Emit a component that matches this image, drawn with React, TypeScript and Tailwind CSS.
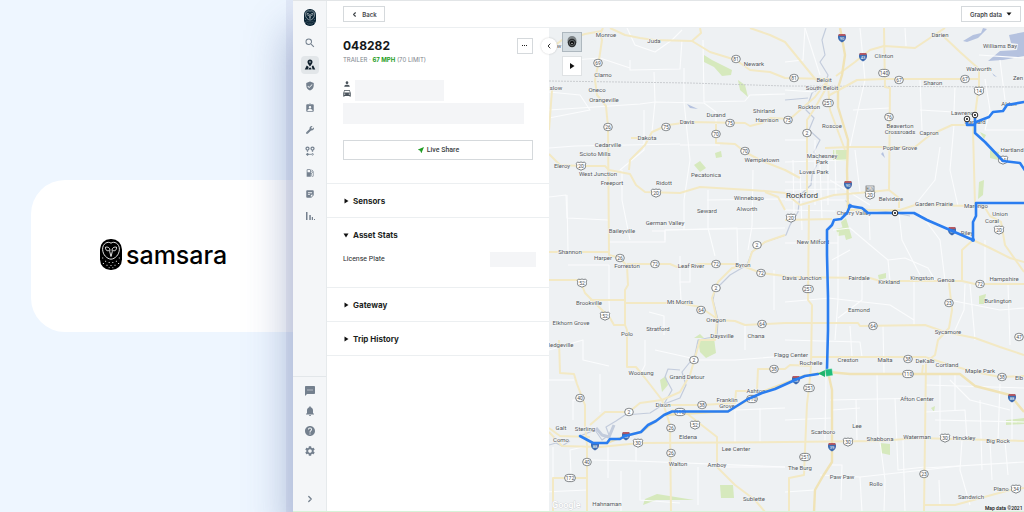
import React from "react";
import {
    MdAssignmentInd,
    MdDirectionsCar,
    MdHelp,
    MdLocalGasStation,
    MdNearMe,
    MdNotifications,
    MdPerson,
    MdSearch,
    MdSettings,
    MdSms,
    MdStickyNote2,
    MdVerifiedUser,
} from "react-icons/md";
import { FaWrench } from "react-icons/fa";
import { ChevronLeft, ChevronRight } from "lucide-react";

type Place = [string, number, number];
type Shield = ["state" | "us" | "interstate", string, number, number];

const places: Place[] = [
    ["Monroe", 606, 35], ["Juda", 654, 41], ["w", 559, 46], ["Newark", 754, 64], ["Clarno", 603, 75],
    ["slow", 556, 88], ["Oneco", 597, 90], ["Orangeville", 604, 100], ["Shirland", 764, 111],
    ["Durand", 716, 115], ["Harrison", 767, 120], ["Davis", 687, 122], ["Dakota", 647, 138],
    ["Cedarville", 608, 145], ["Scioto Mills", 595, 154], ["Wempletown", 762, 160], ["Eleroy", 562, 166],
    ["Darien", 940, 35], ["Williams Bay", 1000, 46], ["Clinton", 884, 56], ["Walworth", 979, 69],
    ["Zen", 1018, 78], ["Beloit", 824, 80], ["South Beloit", 822, 88], ["Sharon", 933, 83],
    ["Rockton", 809, 107], ["Roscoe", 832, 126], ["Alden", 1009, 104], ["Lawrence", 964, 113],
    ["Harvard", 975, 122], ["Beaverton", 900, 126], ["Crossroads", 900, 132], ["Capron", 929, 133],
    ["Poplar Grove", 900, 148], ["Machesney", 822, 156], ["Park", 822, 162], ["Hartland", 1012, 150],
    ["West Junction", 598, 174], ["Freeport", 612, 183], ["Ridott", 664, 183], ["Pecatonica", 706, 175],
    ["Winnebago", 749, 198], ["Seward", 707, 211], ["Alworth", 747, 209], ["German Valley", 665, 223],
    ["Baileyville", 622, 231], ["Shannon", 570, 252], ["Harper", 603, 258], ["Forreston", 627, 266],
    ["Leaf River", 691, 266], ["Byron", 743, 265], ["Mt Morris", 680, 302], ["Brookville", 589, 303],
    ["Oregon", 716, 320], ["Elkhorn Grove", 571, 323], ["Stratford", 658, 329], ["Daysville", 722, 336],
    ["Chana", 756, 336], ["Polo", 627, 334], ["Loves Park", 814, 172], ["Belvidere", 891, 199],
    ["Garden Prairie", 934, 204], ["Marengo", 976, 206], ["Cherry Valley", 854, 213], ["Union", 1000, 214],
    ["Coral", 992, 221], ["Riley", 967, 233], ["New Milford", 813, 242], ["Davis Junction", 802, 278],
    ["Fairdale", 859, 278], ["Kirkland", 889, 282], ["Kingston", 922, 278], ["Genoa", 946, 280],
    ["Hampshire", 1004, 279], ["Burlington", 998, 301], ["Esmond", 859, 310], ["Sycamore", 948, 332],
    ["ledgeville", 561, 345], ["Woosung", 641, 373], ["Grand Detour", 687, 377], ["Dixon", 663, 405],
    ["Franklin", 727, 400], ["Grove", 727, 406], ["Ashton", 756, 391], ["Galt", 561, 428],
    ["Sterling", 585, 429], ["Como", 561, 440], ["Eldena", 688, 437], ["Lee Center", 736, 449],
    ["Walton", 678, 464], ["Amboy", 717, 465], ["Sublette", 754, 499], ["Hahnaman", 607, 504],
    ["Flagg Center", 791, 355], ["Rochelle", 811, 363], ["Creston", 848, 360], ["Malta", 885, 360],
    ["DeKalb", 925, 361], ["Cortland", 947, 365], ["Maple Park", 980, 371], ["Elb", 1019, 378],
    ["Afton Center", 917, 399], ["Lee", 857, 426], ["Scarboro", 823, 432], ["Shabbona", 880, 439],
    ["Waterman", 917, 437], ["Hinckley", 964, 438], ["Big Rock", 998, 441], ["The Burg", 800, 468],
    ["Paw Paw", 842, 477], ["Rollo", 876, 484], ["Plano", 1001, 489], ["Sandwich", 971, 497],
];

const shields: Shield[] = [
    ["state", "69", 598, 63], ["state", "81", 736, 59], ["state", "26", 608, 127], ["state", "75", 666, 127],
    ["state", "75", 730, 123], ["state", "70", 716, 134], ["state", "70", 745, 151], ["us", "20", 581, 166],
    ["interstate", "90", 842, 38], ["interstate", "43", 863, 57], ["state", "140", 884, 73],
    ["state", "81", 794, 78], ["state", "67", 899, 80], ["state", "67", 965, 79], ["us", "14", 979, 91],
    ["state", "251", 828, 103], ["state", "76", 889, 117], ["state", "75", 788, 120], ["state", "2", 807, 133],
    ["us", "14", 1003, 160], ["us", "20", 656, 193], ["state", "26", 620, 258], ["state", "72", 655, 264],
    ["state", "72", 716, 264], ["state", "72", 761, 273], ["state", "2", 757, 245], ["state", "2", 716, 288],
    ["us", "52", 582, 283], ["us", "52", 605, 316], ["state", "64", 701, 310], ["state", "64", 762, 324],
    ["interstate", "90", 848, 185], ["us", "20", 870, 195], ["us", "20", 791, 218],
    ["interstate", "90", 952, 231], ["us", "20", 999, 230], ["state", "251", 808, 289],
    ["state", "72", 980, 284], ["state", "23", 949, 303], ["state", "64", 873, 326], ["state", "47", 1019, 337],
    ["state", "2", 694, 360], ["state", "38", 774, 369], ["state", "40", 580, 398], ["state", "2", 629, 412],
    ["state", "38", 702, 405], ["state", "110", 680, 412], ["state", "110", 752, 399], ["us", "52", 695, 425],
    ["state", "26", 671, 428], ["us", "30", 638, 443], ["state", "26", 671, 453], ["interstate", "88", 595, 446],
    ["interstate", "88", 626, 436], ["state", "40", 587, 462], ["state", "172", 570, 478],
    ["state", "38", 908, 359], ["state", "110", 908, 374], ["state", "38", 1002, 377],
    ["interstate", "88", 796, 380], ["state", "251", 809, 388], ["interstate", "88", 1012, 398],
    ["us", "30", 848, 442], ["us", "30", 945, 438], ["interstate", "39", 832, 447], ["state", "251", 805, 457],
    ["state", "23", 924, 474], ["us", "34", 1016, 489],
];

const highways = [
    "603,28 600,34 602,40 599,60 595,80 597,95 606,106 608,127 609,255 620,258 627,266 628,285 625,290 625,325 627,330 627,367 636,367 645,378 662,400 670,425 671,512",
    "610,28 625,35 640,38 654,40 692,41 710,52 736,60 750,70 770,72 785,78 828,79",
    "692,41 701,33 700,28", "549,50 562,40 570,39 585,34 602,31", "549,130 552,90",
    "629,170 630,160 645,145 652,132 668,125 690,122 745,123 750,126 762,123 770,118 790,119 815,97 828,80",
    "631,138 640,138", "716,124 716,143 735,144 745,152 760,160 785,170 800,178",
    "549,154 560,165 581,166 605,166 609,170 630,174 636,185 645,192 680,193 700,187 750,190 765,191 785,193 800,205",
    "750,28 770,35 785,42 816,80", "884,28 885,87 890,88 889,190",
    "836,76 855,62 870,50 884,46 915,48 945,28", "828,96 857,80 884,79 979,79",
    "940,33 960,52 979,69 979,85 973,130 975,205",
    "825,148 850,147 915,147 930,135 952,125 968,125", "807,195 807,120 815,108 825,90 828,78",
    "828,85 830,110 845,150", "785,220 832,219", "800,205 834,195 870,192 889,190 899,198 899,208",
    "850,210 900,210 915,205 976,206", "973,240 990,248 1010,258 1024,262", "973,240 962,250 962,280",
    "785,277 870,278 880,281 962,281 975,284 1024,284",
    "785,323 858,323 860,326 925,325 945,332 975,338 1000,347 1024,355",
    "949,283 952,310 949,328 938,340 935,355 926,362 924,512",
    "976,203 984,206 990,216 1001,222 1005,245 1024,272",
    "809,205 808,300 812,305 811,366 809,388 807,404 805,450 804,475 789,478 789,512",
    "549,252 608,252", "627,264 670,264 677,267 700,264 735,264 743,266 761,273 785,276",
    "549,280 580,280 585,293 610,318 614,325 625,325", "590,300 625,300", "625,303 680,303 700,307 716,318",
    "743,266 732,268 718,282 712,298 717,320 715,340 700,340 690,375 680,392 662,400 640,403 629,412 605,412 590,425",
    "717,320 735,321 745,325 785,323", "785,235 765,242 752,252 748,265",
    "765,192 778,197 785,210", "559,340 560,373 574,374 577,384 585,405 585,425 587,445 587,512",
    "662,405 702,405 735,403 736,391 757,391 758,369 785,369 790,365 812,366",
    "672,410 685,412 717,437 717,467 735,485 755,500 765,512",
    "549,432 562,446 600,447 640,443 785,442 880,441 917,438 1024,441", "553,512 553,478 587,478",
    "549,428 560,436 590,437", "812,357 925,357 950,365 975,372 1000,377 1024,376",
    "925,505 955,505 1010,490 1024,488", "923,365 922,374",
];

const freeways = [
    "840,28 842,38 845,55 842,75 838,88 838,107 848,140 847,170 848,210",
    "828,372 850,374 960,374 975,386 1010,395 1024,412",
    "828,372 832,390 832,462 823,476 815,490 814,512",
    "580,436 593,443 607,443 625,436 641,432 664,415 728,411 762,392 803,376 828,372",
];

const localRoads = [
    "549,92 580,95 590,110 549,118", "627,28 635,45 655,52 672,40 682,30", "630,60 630,70 680,69 682,40",
    "684,68 684,102 690,160 684,200 684,230", "703,40 704,102 745,101 750,95 785,94", "573,60 600,58 630,68",
    "549,110 640,104 655,102 704,103 716,112 716,124", "654,72 655,102 652,132", "644,110 644,150 620,170",
    "680,145 720,145", "549,148 575,146 680,144", "549,197 566,195 567,218 608,220", "567,195 568,252",
    "608,242 665,242 665,231 652,231", "622,170 622,200 630,240", "665,230 737,228 738,264",
    "708,190 708,228 715,256", "680,256 680,282 690,282 690,264", "707,200 785,199", "753,170 752,226 748,250",
    "665,240 665,230 785,228", "568,265 609,265", "609,265 609,300 610,320", "549,341 549,350 583,340 583,360 609,366",
    "645,340 645,365 640,375", "549,380 574,380", "573,420 573,400 585,400", "600,374 600,412", "649,312 664,316 664,335",
    "681,300 680,282", "774,270 774,310", "655,350 700,360 735,360 785,356", "745,324 745,350",
    "590,460 636,461 636,442", "608,447 608,478", "621,471 621,512", "553,478 553,447", "571,475 570,450 587,446",
    "636,461 785,467", "698,467 698,505", "717,467 785,467", "587,490 545,492", "735,442 735,410 785,408",
    "760,408 760,442", "640,470 640,500 680,503", "785,62 803,60 805,28", "805,28 820,75", "860,28 865,80 858,110 850,147",
    "905,28 906,46", "920,80 922,130", "955,86 954,112 920,110", "853,110 889,108", "940,147 935,180 915,205",
    "954,125 950,170 958,206", "985,79 990,110 985,130 1024,130", "979,55 1024,58", "1000,60 1005,100",
    "785,90 815,92", "785,140 807,140", "785,162 848,160", "815,140 815,205", "835,150 836,195", "855,150 860,192",
    "785,182 848,182", "785,200 850,200", "800,170 802,230", "820,165 822,220", "830,180 870,205",
    "793,160 794,215", "828,160 828,205", "785,190 840,189", "785,210 835,211",
    "833,230 850,228 870,245 888,260 905,258 928,268 935,280", "869,212 870,240", "899,213 902,240 920,275",
    "888,260 890,281", "920,213 940,240 945,281", "838,232 838,300 835,340", "785,302 830,298", "828,298 890,305 914,320",
    "914,281 914,325", "862,281 862,300 838,318", "949,300 1000,310 1024,308", "970,284 975,340", "1008,284 1010,345",
    "785,340 860,342 862,357", "850,326 852,357", "883,326 884,374", "830,400 925,398", "856,400 857,440",
    "877,374 878,440", "895,398 898,470 925,467", "903,440 905,512", "832,410 860,408", "815,375 826,376 825,440",
    "785,420 832,418", "925,412 965,410 967,440", "955,374 955,410", "962,440 960,470 970,505", "980,400 982,470",
    "925,468 1024,462", "940,374 940,438", "990,441 992,480", "1005,441 1008,475", "832,465 842,465 841,500",
    "820,475 860,477 960,466", "860,477 862,512", "785,492 815,490", "880,442 885,480 884,512", "939,480 940,505",
    "950,380 970,400 1010,410", "925,385 1024,388", "935,420 1024,422", "1000,384 998,441", "1012,400 1012,441",
    "965,284 964,310 955,330", "985,240 985,284", "850,250 832,260", "838,243 785,243",
];

const rivers = [
    "826,28 822,40 825,55 820,62 828,75 825,85 812,93 806,110 814,118 809,130 820,140 814,152 819,160 812,175 811,185 800,195 798,212 790,225 786,235 765,242 752,252 747,265 730,275 715,290 713,300 718,320 717,336 698,340 695,355 698,362 690,362 682,372 686,385 680,398 664,404 650,413 625,415 616,421 606,427 609,435 602,440 595,430 580,436",
    "664,404 672,390 665,377 668,369 680,370",
    "549,445 556,443 562,446 570,441",
    "845,200 855,208 890,212 910,216", "785,100 808,98",
];

const routes = [
    "580,436 593,443 607,443 610,439 620,439 625,436 641,432 648,425 656,421 664,415 672,411.5 728,411.5 748,399 762,393 775,389 795,380 805,376 818,374",
    "827,369 828,330 828,297 827,255 827,230 832,225 834,220 841,219 847,213 850,206 862,208 868,213 914,213 927,220 973,240 973,222 976,216 976,203 1100,203",
    "1100,100 1024,102 1007,105 1003,111 993,112 989,117 976,122 974,125 967,125 967,121",
    "975,115 975,133 985,142 1003,161 1020,163 1026,172",
];

const parks = [
    "704,55 712,60 732,70 731,75 722,76 714,67 704,62", "738,80 745,85 748,97 740,90",
    "833,150 847,150 847,161 833,161", "841,222 846,218 852,238 846,240", "836,229 844,227 845,235 838,236",
    "694,500 656,500 643,505 645,499 657,494", "720,485 733,485 734,498 721,498",
    "698,340 714,338 716,353 706,358 700,352", "979,182 984,180 983,195 978,199",
    "1006,420 1024,418 1024,424 1006,425", "880,443 890,444 890,455 881,453",
    "694,165 700,161 706,168 700,172", "715,153 721,151 722,157 716,158",
    "979,296 986,294 984,304 979,304", "990,150 999,152 998,160 990,158", "931,408 935,406 934,412",
    "660,380 666,376 668,385 662,392", "980,132 986,135 984,139", "878,275 886,273 886,278 879,280",
    "694,338 700,334 704,338",
];

const OwlLogo = ({ className }: { className: string }) => (
    <svg viewBox="0 0 22 31" className={className} aria-hidden="true">
        <rect width="22" height="31" rx="10.5" fill="currentColor" />
        <path
            d="M11 4.2C14 1.8 19.6 4.5 19.4 10.3 19.2 16 15 19.8 11 20.2 7 19.8 2.8 16 2.6 10.3 2.4 4.5 8 1.8 11 4.2Z"
            fill="none"
            stroke="#fff"
            strokeWidth="0.9"
        />
        <path
            d="M10.9 17.5 9.7 12.4C10.6 9 8.2 7.7 5.5 8.2 5.2 11.2 7.4 12.5 9.4 11.3M11.1 17.5 12.3 12.4C11.4 9 13.8 7.7 16.5 8.2 16.8 11.2 14.6 12.5 12.6 11.3"
            fill="none"
            stroke="#fff"
            strokeWidth="0.9"
        />
        <path
            d="M2.7 18.5v1M19.3 18.5v1M5.6 21.8v1M16.4 21.8v1M9.2 23v1M12.8 23v1M3.4 24v1M18.6 24v1M7 25.8v1M11 26v1M15 25.8v1M9.2 28.3v.8M12.8 28.3v.8"
            stroke="#fff"
            strokeWidth="0.9"
        />
    </svg>
);

const FleetIcon = () => (
    <svg viewBox="0 0 24 24" className="size-3" fill="currentColor" aria-hidden="true">
        <path d="M12 1a5 5 0 0 0-5 5c0 3.2 5 9 5 9s5-5.8 5-9a5 5 0 0 0-5-5Zm0 3.4a1.600 1.600 0 1 1 0 3.2 1.600 1.600 0 0 1 0-3.2Z" />
        <path d="M5.500 13 9.500 16l-2 5H1.500ZM10.500 17 12 18.500l2-2L15 21H8.500ZM15.500 14l3-1L22.500 21H17Z" />
    </svg>
);

const RoutesIcon = () => (
    <svg viewBox="0 0 24 24" className="size-2.5" aria-hidden="true">
        <g fill="none" stroke="currentColor" strokeWidth="3">
            <circle cx="6" cy="6" r="3.600" />
            <circle cx="18" cy="6" r="3.600" />
            <path d="M6 10v4M18 10v4" />
            <path d="M8 20h7" strokeWidth="2" />
            <circle cx="18" cy="20" r="2" strokeWidth="2" />
        </g>
        <path d="M6 16 10 20 6 24 2 20Z" fill="currentColor" />
    </svg>
);

const ReportsIcon = () => (
    <svg viewBox="0 0 10 10" className="size-2.5" fill="currentColor" aria-hidden="true">
        <path d="M1 1h1.500v8H1ZM4.300 4h1.500v5H4.300ZM6.800 6h1.200v3H6.800ZM9 8h1v1H9Z" />
    </svg>
);

const mainNav = [
    { label: "Search", icon: <MdSearch size={12} /> },
    { label: "Fleet", icon: <FleetIcon />, active: true },
    { label: "Safety", icon: <MdVerifiedUser size={10} /> },
    { label: "Drivers", icon: <MdAssignmentInd size={10} /> },
    { label: "Maintenance", icon: <FaWrench size={8} /> },
    { label: "Routes", icon: <RoutesIcon /> },
    { label: "Fuel", icon: <MdLocalGasStation size={10} /> },
    { label: "Documents", icon: <MdStickyNote2 size={10} /> },
    { label: "Reports", icon: <ReportsIcon /> },
];

const footerNav = [
    { label: "Feedback", icon: <MdSms size={12} /> },
    { label: "Alerts", icon: <MdNotifications size={12} /> },
    { label: "Help", icon: <MdHelp size={12} /> },
    { label: "Settings", icon: <MdSettings size={12} /> },
];

const Sidebar = () => (
    <nav className="flex w-[34px] shrink-0 flex-col items-center border-r border-[#e6eaec] bg-[#f4f6f8] text-[#74808e]">
        <OwlLogo className="mt-2 h-[17px] w-3 shrink-0 text-[#0b2536]" />
        <div className="mt-2 flex h-[191px] shrink-0 flex-col justify-between">
            {mainNav.map((item) => (
                <button
                    key={item.label}
                    aria-label={item.label}
                    className={
                        item.active
                            ? "flex h-[18px] w-[18px] items-center justify-center rounded-sm bg-[#e2e6e9] text-[#12212e]"
                            : "flex h-[18px] w-[18px] items-center justify-center"
                    }
                >
                    {item.icon}
                </button>
            ))}
        </div>
        <div className="mt-auto flex w-full flex-col items-center gap-1 border-t border-[#e3e7ea] pt-1.5">
            {footerNav.map((item) => (
                <button key={item.label} aria-label={item.label} className="flex size-4 items-center justify-center">
                    {item.icon}
                </button>
            ))}
        </div>
        <button aria-label="Expand menu" className="mt-8 mb-1 flex size-4 shrink-0 items-center justify-center">
            <ChevronRight size={10} strokeWidth={3} />
        </button>
    </nav>
);

const Section = ({ title, open, children }: { title: string; open?: boolean; children?: React.ReactNode }) => (
    <div className="border-b border-[#eceff1]">
        <button
            aria-expanded={!!open}
            className="flex h-[33px] w-full items-center gap-1 px-4 text-left text-[8px] font-bold text-[#1c1f22]"
        >
            <svg viewBox="0 0 6 6" className="size-1.5" aria-hidden="true">
                <path d={open ? "M0.500 1.500h5L3 5.500Z" : "M1.500 0.500v5L5.500 3Z"} fill="#111" />
            </svg>
            {title}
        </button>
        {children}
    </div>
);

const DetailPanel = () => (
    <section className="relative z-10 w-[222px] shrink-0 bg-white">
        <button
            aria-label="Collapse panel"
            className="absolute top-2.5 -right-2 flex size-4 items-center justify-center rounded-full bg-white text-[#333] shadow-[0_0_2px_rgba(0,0,0,0.2)]"
        >
            <ChevronLeft size={8} strokeWidth={3} />
        </button>
        <div className="h-[156px] border-b border-[#eceff1] px-4 pt-2.5">
            <div className="flex items-start justify-between">
                <div>
                    <h1 className="text-[12px] leading-4 font-bold text-[#15181a]">048282</h1>
                    <p className="mt-0.5 text-[6px] leading-2 text-[#7d858c]">
                        TRAILER · <span className="font-bold text-[#1f9d24]">67 MPH</span> (70 LIMIT)
                    </p>
                </div>
                <button
                    aria-label="More options"
                    className="flex size-4 items-center justify-center border border-[#d5d9dc]"
                >
                    <svg viewBox="0 0 6 2" className="h-0.5 w-1.5" fill="#222" aria-hidden="true">
                        <path d="M0 0h1v1H0ZM2 0h1v1H2ZM4 0h1v1H4Z" />
                    </svg>
                </button>
            </div>
            <div className="mt-4 flex gap-1 text-[#4b545c]">
                <div className="flex w-2 shrink-0 flex-col items-center">
                    <MdPerson size={8} className="shrink-0" />
                    <MdDirectionsCar size={10} className="shrink-0" />
                </div>
                <div className="h-[21px] w-[89px] bg-[#f4f5f7]" />
            </div>
            <div className="mt-0.5 mr-[9px] h-[21px] bg-[#f4f5f7]" />
            <button className="mt-4 flex h-5 w-full items-center justify-center gap-0.5 border border-[#d5d9dc] font-['Roboto',sans-serif] text-[7px] font-medium text-[#3a3f44]">
                <MdNearMe size={8} className="text-[#1f9d24]" />
                Live Share
            </button>
        </div>
        <Section title="Sensors" />
        <Section title="Asset Stats" open>
            <div className="flex h-9 items-start justify-between pr-[13px] pl-4">
                <span className="pt-0.5 font-['Roboto',sans-serif] text-[7px] leading-3 text-[#24282b]">License Plate</span>
                <div className="mt-px h-[15px] w-[46px] bg-[#f4f5f7]" />
            </div>
        </Section>
        <Section title="Gateway" />
        <Section title="Trip History" />
    </section>
);

const RoadShield = ({ kind, label, x, y }: { kind: Shield[0]; label: string; x: number; y: number }) => {
    const half = label.length > 2 ? 5.4 : 4.3;
    return (
        <g transform={`translate(${x} ${y})`}>
            {kind === "state" && (
                <rect x={-half} y="-3.6" width={half * 2} height="7.2" rx="3.600" fill="#fff" stroke="#62676b" strokeWidth="0.800" />
            )}
            {kind === "us" && (
                <path
                    d="M-3.500-4Q-2-3 0-4 2-3 3.500-4L4.700-2.600Q3.800-1 4.500.8 4.500 3 2 3.300L0 4.200-2 3.300Q-4.500 3-4.500.8-3.800-1-4.700-2.600Z"
                    fill="#fff"
                    stroke="#62676b"
                    strokeWidth="0.800"
                />
            )}
            {kind === "interstate" && (
                <>
                    <path d="M-3-4Q-1.500-3.300 0-4 1.500-3.300 3-4L4-2Q4.600 2 0 4.500-4.600 2-4-2Z" fill="#3f6cb0" />
                    <path d="M-3-4Q-1.500-3.300 0-4 1.500-3.300 3-4L3.800-2.200H-3.800Z" fill="#c9504d" />
                </>
            )}
            <text
                y={kind === "interstate" ? 2 : 1.8}
                textAnchor="middle"
                fontSize={kind === "interstate" ? 4 : 5}
                fill={kind === "interstate" ? "#fff" : "#4a4e52"}
            >
                {label}
            </text>
        </g>
    );
};

const lines = (items: string[]) => items.map((points) => <polyline key={points} points={points} />);

const StopMarker = ({ x, y }: { x: number; y: number }) => (
    <g>
        <circle cx={x} cy={y} r="2.800" fill="#fff" stroke="#2b2b2b" strokeWidth="1" />
        <circle cx={x} cy={y} r="1.100" fill="#1d1d1d" />
    </g>
);

const RouteMap = () => (
    <div className="relative min-w-0 flex-1 overflow-hidden bg-[#eef1f3]">
        <svg
            viewBox="549 28 475 484"
            preserveAspectRatio="xMinYMin slice"
            className="h-full w-full font-['Roboto',sans-serif]"
            role="img"
            aria-label="Trip map"
        >
            <g fill="#d6e9bd">
                {parks.map((points) => (
                    <polygon key={points} points={points} />
                ))}
            </g>
            <g fill="#b5c2df">
                <path d="M983 28 981 33 973 35 963 41 967 42 978 38 987 29ZM1024 32 1009 35 1011 43 1018 44 1017 50 1000 51 988 61 1003 60 1024 56Z" />
                <path d="M687 104 698 109 690 108ZM992 73 997 77 994 76ZM883 152 885 158 881 154Z" />
            </g>
            <g fill="none" stroke="#c3ccdc" strokeWidth="1.200" strokeLinejoin="round">
                {lines(rivers)}
                <path d="M596 428 602 435 609 437 614 425" strokeWidth="3" />
            </g>
            <g fill="none" stroke="#fbfcfd" strokeWidth="1.100" strokeLinejoin="round">
                {lines(localRoads)}
            </g>
            <path d="M549 81 690 83 785 86 1024 87" fill="none" stroke="#babdc2" strokeWidth="0.700" strokeDasharray="2 1" />
            <g fill="none" stroke="#f3e9c4" strokeWidth="2" strokeLinejoin="round">
                {lines(highways)}
            </g>
            <g fill="none" stroke="#f0e3b6" strokeWidth="2.400" strokeLinejoin="round">
                {lines(freeways)}
            </g>
            <g fontSize="6" fill="#54585d" stroke="#f5f7f8" strokeWidth="1" paintOrder="stroke" textAnchor="middle">
                {places.map(([name, x, y]) => (
                    <text key={name} x={x} y={y + 2}>
                        {name}
                    </text>
                ))}
                <text x="802" y="198" fontSize="8" fill="#3a3d40">
                    Rockford
                </text>
            </g>
            <rect x="866" y="186" width="8" height="5" fill="#fff" stroke="#62676b" strokeWidth="0.700" />
            <text x="870" y="190" fontSize="4" textAnchor="middle" fill="#4a4e52">
                BUS
            </text>
            {shields.map(([kind, label, x, y]) => (
                <RoadShield key={`${x}-${y}`} kind={kind} label={label} x={x} y={y} />
            ))}
            <g fill="none" stroke="#2a7df0" strokeWidth="2.600" strokeLinejoin="round" strokeLinecap="round">
                {lines(routes)}
            </g>
            <circle cx="973" cy="240" r="2" fill="#2a7df0" />
            <circle cx="850" cy="206" r="2" fill="#2a7df0" />
            <StopMarker x={895} y={213} />
            <StopMarker x={967} y={119} />
            <StopMarker x={975} y={115} />
            <path d="M818 373.500 825 370V377Z" fill="#20b36b" />
            <path d="M825 369.500 832 368.500 833 375.500 826 376.500Z" fill="#20bd7b" stroke="#dff5ea" strokeWidth="0.500" />
            <text x="552" y="508" fontSize="9" fontWeight="500" fill="#fff" stroke="#c4c8cb" strokeWidth="0.600" paintOrder="stroke">
                Google
            </text>
            <text x="985" y="510" fontSize="5" fontWeight="500" fill="#111">
                Map data ©2021
            </text>
        </svg>
        <div className="absolute top-1 left-[13px] flex flex-col gap-1">
            <button
                aria-label="Camera view"
                className="flex size-5 items-center justify-center border border-[#aeb8bf] bg-[#d5dde2]"
            >
                <svg viewBox="0 0 12 14" className="h-3.5 w-3" aria-hidden="true">
                    <path d="M1.500 5.500a4.500 4.500 0 0 1 9 0V8h-9Z" fill="#7d8386" />
                    <circle cx="6" cy="8" r="4.200" fill="#2a2d2f" />
                    <circle cx="6" cy="8" r="2.600" fill="#0b0c0d" stroke="#8d9396" strokeWidth="0.600" />
                    <circle cx="6" cy="8.500" r="0.800" fill="#bbb" />
                </svg>
            </button>
            <button aria-label="Play trip" className="flex size-5 items-center justify-center border border-[#dfe2e4] bg-white">
                <svg viewBox="0 0 6 6" className="size-1.5" aria-hidden="true">
                    <path d="M1 0v6L5.500 3Z" fill="#111" />
                </svg>
            </button>
        </div>
    </div>
);

export default function App() {
    return (
        <div className="flex h-screen min-h-[512px] overflow-hidden bg-[#eef6ff] font-['Inter',sans-serif]">
            <div className="flex w-[293px] shrink-0 items-center pl-[31px]">
                <div className="flex h-[152px] w-full items-center gap-1 rounded-l-[34px] bg-white pb-[3px] pl-[69px]">
                    <OwlLogo className="h-[31px] w-[22px] text-black" />
                    <span className="text-[25px] leading-7 font-medium text-black">samsara</span>
                </div>
            </div>
            <main className="relative flex min-w-0 flex-1 border-t border-b border-t-[#e2e5e7] border-b-[#d6f3d8] bg-white shadow-[0_0_0_7px_rgba(105,100,165,0.09),-4px_30px_40px_rgba(65,90,150,0.4)]">
                <Sidebar />
                <div className="flex min-w-0 flex-1 flex-col">
                    <header className="flex h-[27px] shrink-0 items-center justify-between border-b border-[#eceff1] pr-[3px] pl-4 text-[6px] font-semibold text-[#3f4449]">
                        <button className="flex h-4 w-[42px] items-center justify-center gap-1 border border-[#d5d9dc]">
                            <ChevronLeft size={7} strokeWidth={4} />
                            Back
                        </button>
                        <button className="flex h-4 w-[60px] items-center justify-center gap-1 border border-[#d5d9dc]">
                            Graph data
                            <svg viewBox="0 0 6 4" className="h-1 w-1.5" aria-hidden="true">
                                <path d="M0.500 0.500h5L3 3.500Z" fill="#111" />
                            </svg>
                        </button>
                    </header>
                    <div className="flex min-h-0 flex-1">
                        <DetailPanel />
                        <RouteMap />
                    </div>
                </div>
            </main>
        </div>
    );
}
